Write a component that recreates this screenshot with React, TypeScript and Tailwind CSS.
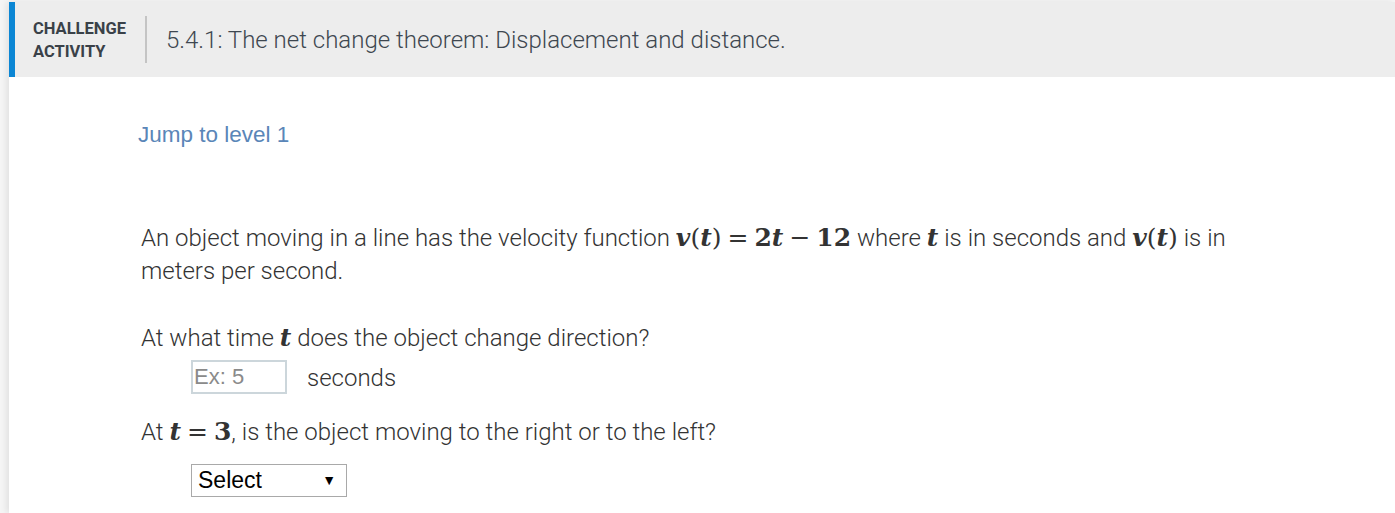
import React from "react";

const M = ({ children }: { children: React.ReactNode }) => (
  <span className="font-['DejaVu_Serif',serif] text-[25px] leading-none font-bold italic">{children}</span>
);
const R = ({ children }: { children: React.ReactNode }) => (
  <span className="font-['DejaVu_Serif',serif] text-[25px] leading-none">{children}</span>
);
const B = ({ children }: { children: React.ReactNode }) => (
  <span className="font-['DejaVu_Serif',serif] text-[25px] leading-none font-bold">{children}</span>
);
const Op = ({ children }: { children: React.ReactNode }) => (
  <span className="mx-[6px] font-['DejaVu_Serif',serif] text-[25px] leading-none">{children}</span>
);

export default function App() {
  return (
    <div className="min-h-[513px] w-[1395px] bg-[#f5f5f5] pl-[9px] pt-[2px] overflow-hidden">
      <div className="bg-white min-h-[511px] shadow-[-3px_0_6px_rgba(0,0,0,0.08)]">
        <div className="flex h-[75px] items-center bg-[#ededed] border-l-[6px] border-[#0b86d4]">
          <div className="ml-[18px] w-[112px] font-['Roboto',sans-serif] text-[16.5px] font-bold leading-[23px] text-[#3a4148]">
            CHALLENGE
            <br />
            ACTIVITY
          </div>
          <div className="h-[47px] w-[2px] bg-[#c4c4c4]" />
          <div className="ml-[19px] font-['Roboto',sans-serif] text-[24px] font-light text-[#3e4750]">
            5.4.1: The net change theorem: Displacement and distance.
          </div>
        </div>
        <div className="pl-[129px] pt-[41px] font-['Liberation_Sans',Arial,sans-serif] text-[22.5px] text-[#5a86b8]">
          Jump to level 1
        </div>
        <div className="pl-[132px] pt-[70px] pr-[135px] font-['Roboto',sans-serif] text-[24px] font-light text-[#333] leading-[33px]">
          <p>
            An object moving in a line has the velocity function <M>v</M>
            <R>(</R>
            <M>t</M>
            <R>)</R>
            <Op>=</Op>
            <B>2</B>
            <M>t</M>
            <Op>−</Op>
            <B>12</B> where <M>t</M> is in seconds and <M>v</M>
            <R>(</R>
            <M>t</M>
            <R>)</R> is in meters per second.
          </p>
          <p className="mt-[34px]">
            At what time <M>t</M> does the object change direction?
          </p>
          <div className="mt-[5px] flex items-center pl-[50px]">
            <div className="flex h-[34px] w-[96px] items-center border-2 border-[#ccd6db] pl-[1px] font-['Liberation_Sans',Arial,sans-serif] text-[22px] text-[#8a8a8a]">
              Ex: 5
            </div>
            <span className="ml-[20px] translate-y-[2px]">seconds</span>
          </div>
          <p className="mt-[22px]">
            At <M>t</M>
            <Op>=</Op>
            <B>3</B>, is the object moving to the right or to the left?
          </p>
          <div className="mt-[15px] pl-[50px]">
            <div className="flex h-[33px] w-[156px] items-center justify-between border border-[#a9a9a9] pl-[6px] pr-[10px] font-['Liberation_Sans',Arial,sans-serif] text-[23px] text-black">
              <span>Select</span>
              <span className="text-[14px]">▼</span>
            </div>
          </div>
        </div>
      </div>
    </div>
  );
}
